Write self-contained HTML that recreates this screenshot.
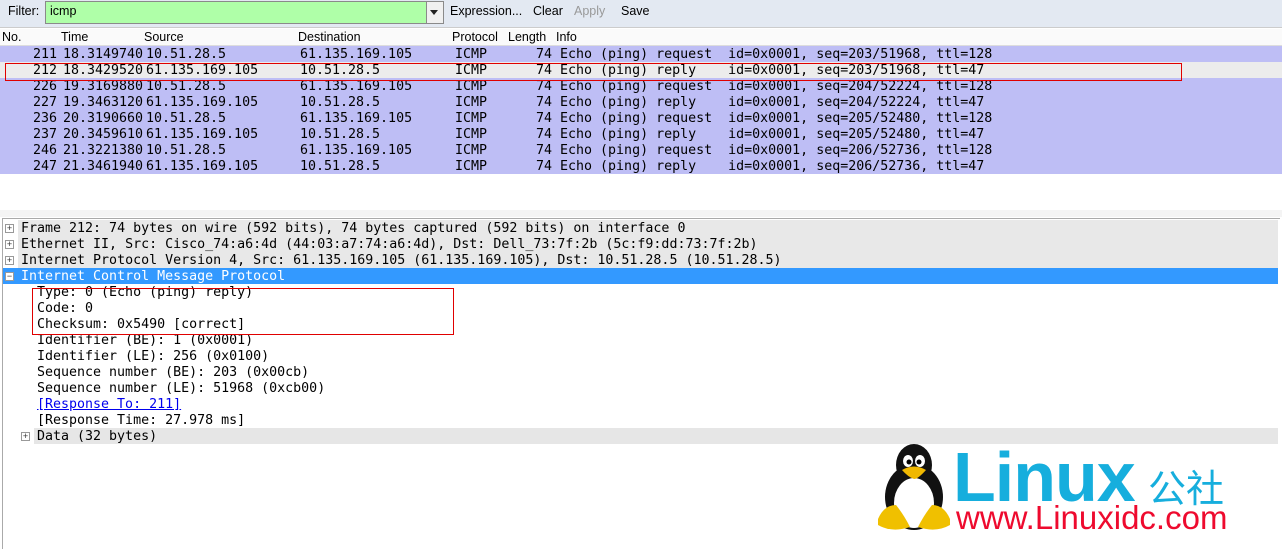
<html><head><style>
body{margin:0;width:1282px;height:545px;background:#fff;position:relative;overflow:hidden;font-family:"DejaVu Sans Mono",monospace;font-size:13.3px}
.a{position:absolute;white-space:pre}
.ui{font-family:"Liberation Sans",sans-serif;font-size:12.5px}
.row{position:absolute;left:0;width:1282px;height:16px;background:#bebef5}
.row span{position:absolute;top:1px;line-height:16px;white-space:pre}
.d{position:absolute;height:16px;line-height:18px;white-space:pre}
.t{position:absolute;white-space:pre;line-height:16px}
.pb{position:absolute;width:7px;height:7px;border:1px solid #999;background:#fff;font-size:9px;line-height:7px;text-align:center;color:#333;font-family:"Liberation Sans",sans-serif}
</style></head><body>
<div class="a" style="left:0;top:0;width:1282px;height:27px;background:#e3e9f2;border-bottom:1px solid #ccc"></div>
<div class="a ui" style="left:8px;top:4px">Filter:</div>
<div class="a" style="left:45px;top:1px;width:381px;height:21px;background:#afffa8;border:1px solid #8a8a8a"></div>
<div class="a ui" style="left:50px;top:4px">icmp</div>
<div class="a" style="left:426px;top:1px;width:16px;height:21px;background:#f0f0f0;border:1px solid #8a8a8a"></div>
<div class="a" style="left:430px;top:10px;width:0;height:0;border-left:4px solid transparent;border-right:4px solid transparent;border-top:5px solid #222"></div>
<div class="a ui" style="left:450px;top:4px">Expression...</div>
<div class="a ui" style="left:533px;top:4px">Clear</div>
<div class="a ui" style="left:574px;top:4px;color:#999">Apply</div>
<div class="a ui" style="left:621px;top:4px">Save</div>
<div class="a" style="left:0;top:29px;width:1282px;height:16px;background:#fafafa;border-bottom:1px solid #ddd"></div>
<div class="a ui" style="left:2px;top:30px">No.</div>
<div class="a ui" style="left:61px;top:30px">Time</div>
<div class="a ui" style="left:144px;top:30px">Source</div>
<div class="a ui" style="left:298px;top:30px">Destination</div>
<div class="a ui" style="left:452px;top:30px">Protocol</div>
<div class="a ui" style="left:508px;top:30px">Length</div>
<div class="a ui" style="left:556px;top:30px">Info</div>

<div class="row" style="top:46px"><span style="left:33px">211</span><span style="left:63px">18.3149740</span><span style="left:146px">10.51.28.5</span><span style="left:300px">61.135.169.105</span><span style="left:455px">ICMP</span><span style="left:536px">74 Echo (ping) request  id=0x0001, seq=203/51968, ttl=128</span></div>
<div class="row" style="top:62px;background:#ececec"><span style="left:33px">212</span><span style="left:63px">18.3429520</span><span style="left:146px">61.135.169.105</span><span style="left:300px">10.51.28.5</span><span style="left:455px">ICMP</span><span style="left:536px">74 Echo (ping) reply    id=0x0001, seq=203/51968, ttl=47</span></div>
<div class="row" style="top:78px"><span style="left:33px">226</span><span style="left:63px">19.3169880</span><span style="left:146px">10.51.28.5</span><span style="left:300px">61.135.169.105</span><span style="left:455px">ICMP</span><span style="left:536px">74 Echo (ping) request  id=0x0001, seq=204/52224, ttl=128</span></div>
<div class="row" style="top:94px"><span style="left:33px">227</span><span style="left:63px">19.3463120</span><span style="left:146px">61.135.169.105</span><span style="left:300px">10.51.28.5</span><span style="left:455px">ICMP</span><span style="left:536px">74 Echo (ping) reply    id=0x0001, seq=204/52224, ttl=47</span></div>
<div class="row" style="top:110px"><span style="left:33px">236</span><span style="left:63px">20.3190660</span><span style="left:146px">10.51.28.5</span><span style="left:300px">61.135.169.105</span><span style="left:455px">ICMP</span><span style="left:536px">74 Echo (ping) request  id=0x0001, seq=205/52480, ttl=128</span></div>
<div class="row" style="top:126px"><span style="left:33px">237</span><span style="left:63px">20.3459610</span><span style="left:146px">61.135.169.105</span><span style="left:300px">10.51.28.5</span><span style="left:455px">ICMP</span><span style="left:536px">74 Echo (ping) reply    id=0x0001, seq=205/52480, ttl=47</span></div>
<div class="row" style="top:142px"><span style="left:33px">246</span><span style="left:63px">21.3221380</span><span style="left:146px">10.51.28.5</span><span style="left:300px">61.135.169.105</span><span style="left:455px">ICMP</span><span style="left:536px">74 Echo (ping) request  id=0x0001, seq=206/52736, ttl=128</span></div>
<div class="row" style="top:158px"><span style="left:33px">247</span><span style="left:63px">21.3461940</span><span style="left:146px">61.135.169.105</span><span style="left:300px">10.51.28.5</span><span style="left:455px">ICMP</span><span style="left:536px">74 Echo (ping) reply    id=0x0001, seq=206/52736, ttl=47</span></div>
<div class="a" style="left:5px;top:63px;width:1175px;height:16px;border:1px solid #e00000"></div>

<div class="a" style="left:0;top:210px;width:1282px;height:7px;background:#f4f4f4"></div>
<div class="a" style="left:2px;top:218px;width:1277px;height:330px;border-left:1px solid #aaa;border-top:1px solid #aaa"></div>
<div class="d" style="left:18px;top:220px;width:1260px;background:#e8e8e8"></div>
<div class="d" style="left:18px;top:236px;width:1260px;background:#e8e8e8"></div>
<div class="d" style="left:18px;top:252px;width:1260px;background:#e8e8e8"></div>
<div class="d" style="left:3px;top:268px;width:1275px;background:#3399ff"></div>
<div class="d" style="left:21px;top:220px">Frame 212: 74 bytes on wire (592 bits), 74 bytes captured (592 bits) on interface 0</div>
<div class="d" style="left:21px;top:236px">Ethernet II, Src: Cisco_74:a6:4d (44:03:a7:74:a6:4d), Dst: Dell_73:7f:2b (5c:f9:dd:73:7f:2b)</div>
<div class="d" style="left:21px;top:252px">Internet Protocol Version 4, Src: 61.135.169.105 (61.135.169.105), Dst: 10.51.28.5 (10.51.28.5)</div>
<div class="d" style="left:21px;top:268px;color:#fff">Internet Control Message Protocol</div>
<div class="pb" style="left:5px;top:224px">+</div>
<div class="pb" style="left:5px;top:240px">+</div>
<div class="pb" style="left:5px;top:256px">+</div>
<div class="pb" style="left:5px;top:272px">−</div>
<div class="d" style="left:37px;top:284px">Type: 0 (Echo (ping) reply)</div>
<div class="d" style="left:37px;top:300px">Code: 0</div>
<div class="d" style="left:37px;top:316px">Checksum: 0x5490 [correct]</div>
<div class="d" style="left:37px;top:332px">Identifier (BE): 1 (0x0001)</div>
<div class="d" style="left:37px;top:348px">Identifier (LE): 256 (0x0100)</div>
<div class="d" style="left:37px;top:364px">Sequence number (BE): 203 (0x00cb)</div>
<div class="d" style="left:37px;top:380px">Sequence number (LE): 51968 (0xcb00)</div>
<div class="d" style="left:37px;top:396px;color:#0000ee;text-decoration:underline">[Response To: 211]</div>
<div class="d" style="left:37px;top:412px">[Response Time: 27.978 ms]</div>
<div class="d" style="left:34px;top:428px;width:1244px;background:#e6e6e6"></div>
<div class="d" style="left:37px;top:428px">Data (32 bytes)</div>
<div class="pb" style="left:21px;top:432px">+</div>
<div class="a" style="left:32px;top:288px;width:420px;height:45px;border:1px solid #e00000"></div>

<svg class="a" style="left:878px;top:443px" width="72" height="90" viewBox="0 0 72 90">
<ellipse cx="36" cy="54" rx="29" ry="33" fill="#111"/>
<ellipse cx="36" cy="22" rx="18" ry="21" fill="#111"/>
<ellipse cx="36" cy="60" rx="20" ry="25" fill="#fff"/>
<ellipse cx="30" cy="18" rx="5" ry="6" fill="#fff"/><ellipse cx="42" cy="18" rx="5" ry="6" fill="#fff"/>
<circle cx="31" cy="19" r="2.5" fill="#000"/><circle cx="41" cy="19" r="2.5" fill="#000"/>
<path d="M24 27 Q36 20 48 27 Q40 36 36 36 Q30 34 24 27Z" fill="#f0b800"/>
<path d="M0 76 Q6 62 18 62 Q26 72 32 84 Q14 90 0 82Z" fill="#f0c000"/>
<path d="M72 76 Q66 62 54 62 Q46 72 40 84 Q58 90 72 82Z" fill="#f0c000"/>
</svg>
<div class="a" style="left:953px;top:437px;font-family:'Liberation Sans',sans-serif;font-weight:bold;font-size:70px;color:#16aedd;letter-spacing:-1px">Linux</div>
<div class="a" style="left:1148px;top:466px;font-family:'Noto Sans CJK SC',sans-serif;font-size:38px;color:#16aedd;line-height:40px">公社</div>
<div class="a" style="left:956px;top:499px;font-family:'Liberation Sans',sans-serif;font-size:33px;color:#ee0a2e">www.Linuxidc.com</div>
</body></html>
